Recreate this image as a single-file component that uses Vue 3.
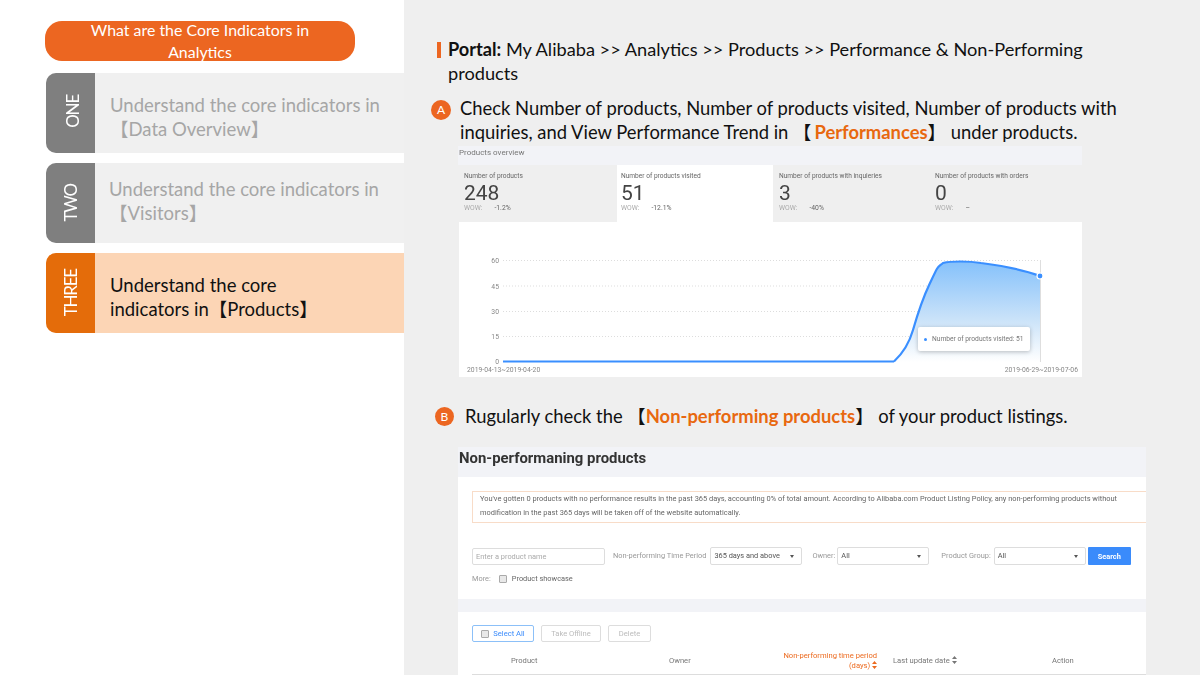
<template>
  <div class="page">
    <aside class="side">
      <div class="pill"><span>What are the Core Indicators in<br />Analytics</span></div>
      <div
        v-for="item in steps"
        :key="item.tab"
        class="step"
        :class="[item.cls, { active: item.active }]"
      >
        <div class="tab"><span>{{ item.tab }}</span></div>
        <p class="stepText">{{ item.line1 }}<br />{{ item.line2 }}</p>
      </div>
    </aside>

    <main class="content">
      <div class="portal">
        <span class="bar"></span>
        <p><b>Portal:</b> My Alibaba &gt;&gt; Analytics &gt;&gt; Products &gt;&gt; Performance &amp; Non-Performing<br />products</p>
      </div>

      <div class="point pointA">
        <span class="badge">A</span>
        <p>Check Number of products, Number of products visited, Number of products with<br />inquiries, and View Performance Trend in 【<em>Performances</em>】 under products.</p>
      </div>

      <section class="shotA">
        <div class="shotTitle">Products overview</div>
        <div class="stats">
          <div v-for="s in stats" :key="s.label" class="stat" :class="{ on: s.on }">
            <div class="statLabel">{{ s.label }}</div>
            <div class="statNum">{{ s.num }}</div>
            <div class="statWow"><span>WOW:</span><span class="wowVal">{{ s.wow }}</span></div>
          </div>
        </div>
        <div class="chart">
          <svg width="623" height="155" viewBox="0 0 623 155">
            <defs>
              <linearGradient id="area" x1="0" y1="0" x2="0" y2="1">
                <stop offset="0" stop-color="#85c1fb" />
                <stop offset="0.6" stop-color="#cde4f9" />
                <stop offset="1" stop-color="#ffffff" />
              </linearGradient>
            </defs>
            <g v-for="g in grid" :key="g.label">
              <line x1="44" x2="581" :y1="g.y" :y2="g.y" class="gridLine" />
              <text x="40" :y="g.y + 2.5" text-anchor="end" class="axis">{{ g.label }}</text>
            </g>
            <line x1="44" x2="581" y1="139.5" y2="139.5" stroke="#dcdcdc" />
            <line x1="581.5" x2="581.5" y1="38" y2="140" stroke="#dedede" />
            <path :d="curve + ' L581 140 L435 140 Z'" fill="url(#area)" />
            <path :d="'M44 139.5 L435 139.5 ' + curve" fill="none" stroke="#3a8fff" stroke-width="2.2" />
            <circle cx="581" cy="54" r="3" fill="#3a8fff" stroke="#fff" stroke-width="1.2" />
            <text x="8" y="150" class="axis">2019-04-13~2019-04-20</text>
            <text x="619" y="150" text-anchor="end" class="axis">2019-06-29~2019-07-06</text>
          </svg>
          <div class="tip"><i></i>Number of products visited: 51</div>
        </div>
      </section>

      <div class="point pointB">
        <span class="badge small">B</span>
        <p>Rugularly check the 【<em>Non-performing products</em>】 of your product listings.</p>
      </div>

      <section class="shotB">
        <h2>Non-performaning products</h2>
        <div class="panel filterPanel">
          <div class="notice">You've gotten 0 products with no performance results in the past 365 days, accounting 0% of total amount. According to Alibaba.com Product Listing Policy, any non-performing products without<br />modification in the past 365 days will be taken off of the website automatically.</div>
          <div class="filters">
            <div class="input">Enter a product name</div>
            <span class="lbl lblTime">Non-performing Time Period</span>
            <div class="select"><span>365 days and above</span><i></i></div>
            <span class="lbl lblOwner">Owner:</span>
            <div class="select"><span>All</span><i></i></div>
            <span class="lbl lblGroup">Product Group:</span>
            <div class="select"><span>All</span><i></i></div>
            <button class="search">Search</button>
          </div>
          <div class="more">
            <span class="lbl">More:</span>
            <span class="check"></span>
            <span class="showcase">Product showcase</span>
          </div>
        </div>
        <div class="panel tablePanel">
          <div class="actions">
            <button class="btn primary"><span class="check"></span>Select All</button>
            <button class="btn offline">Take Offline</button>
            <button class="btn del">Delete</button>
          </div>
          <div class="thead">
            <span class="colProduct">Product</span>
            <span class="colOwner">Owner</span>
            <span class="colPeriod">Non-performing time period<br />(days)
              <svg class="sort" width="5" height="8" viewBox="0 0 5 8"><path d="M2.5 0 5 3H0zM0 5h5L2.5 8z" fill="#ec6a1f" /></svg>
            </span>
            <span class="colDate">Last update date
              <svg class="sort" width="5" height="8" viewBox="0 0 5 8"><path d="M2.5 0 5 3H0zM0 5h5L2.5 8z" fill="#777" /></svg>
            </span>
            <span class="colAction">Action</span>
          </div>
        </div>
      </section>
    </main>
  </div>
</template>

<script setup>
const steps = [
  { tab: "ONE", cls: "one", line1: "Understand the core indicators in", line2: "【Data Overview】" },
  { tab: "TWO", cls: "two", line1: "Understand the core indicators in", line2: "【Visitors】" },
  { tab: "THREE", cls: "three", active: true, line1: "Understand the core", line2: "indicators in【Products】" },
];

const stats = [
  { label: "Number of products", num: "248", wow: "-1.2%" },
  { label: "Number of products visited", num: "51", wow: "-12.1%", on: true },
  { label: "Number of products with inquieries", num: "3", wow: "-40%" },
  { label: "Number of products with orders", num: "0", wow: "–" },
];

const grid = [
  { label: "60", y: 38.5 },
  { label: "45", y: 64 },
  { label: "30", y: 89.5 },
  { label: "15", y: 114.5 },
  { label: "0", y: 139.5 },
];

const curve =
  "M435 139.5 C442 133 450 122 454 108 S462 80 471 61 S478 46 484 41 C492 39 510 39 522 41 C545 44 565 48 581 54";
</script>

<style>
body {
  margin: 0;
  overflow: hidden;
}
</style>

<style scoped>
.page {
  display: flex;
  width: 1200px;
  height: 675px;
  overflow: hidden;
  background: #fff;
  font-family: Lato, "Noto Sans CJK SC", sans-serif;
}

.side {
  width: 404px;
  flex: none;
  padding: 21px 0 0 46px;
  box-sizing: border-box;
}

.pill {
  display: flex;
  align-items: center;
  justify-content: center;
  width: 310px;
  height: 40px;
  margin: 0 0 12px -1px;
  border-radius: 17px;
  background: #ec6621;
  color: #fff;
  font-size: 15.9px;
  line-height: 22px;
  text-align: center;
}

.step {
  display: flex;
  height: 80px;
  margin-bottom: 10px;
  background: #f0f0f0;
  border-radius: 10px 0 0 10px;
  overflow: hidden;
  color: #a6a6a6;
}

.step.active {
  background: #fcd5b5;
  color: #111;
}

.tab {
  width: 49px;
  flex: none;
  display: flex;
  align-items: center;
  justify-content: center;
  background: #7f7f7f;
  color: #fff;
  font-size: 17px;
  letter-spacing: -1.2px;
}

.tab span {
  writing-mode: vertical-rl;
  transform: rotate(180deg);
}

.one .tab span {
  margin: 0 0 3px 3px;
}

.active .tab {
  background: #e46c0a;
}

.stepText {
  margin: 0;
  align-self: center;
  padding-left: 15px;
  font-size: 18.5px;
  line-height: 24px;
}

.one .stepText,
.three .stepText {
  padding-top: 7px;
}

.two .stepText {
  padding-left: 14px;
  padding-bottom: 5px;
}

.content {
  flex: 1;
  background: #efefef;
  padding: 37px 0 0 27px;
  color: #111;
  font-size: 18.4px;
  line-height: 24px;
}

.portal {
  display: flex;
  gap: 7px;
}

.portal p {
  font-size: 18.2px;
}

.portal p,
.point p {
  margin: 0;
  white-space: nowrap;
}

.portal b {
  font-weight: 700;
}

.bar {
  width: 4px;
  height: 16px;
  margin: 5px 0 0 6px;
  background: #ec6621;
  flex: none;
}

.point {
  display: flex;
}

.pointA {
  margin-top: 11px;
  gap: 9px;
}

.pointA em {
  margin-left: 3px;
}

.pointB {
  margin-top: 27px;
  gap: 11px;
  padding-left: 4px;
}

.badge {
  width: 20px;
  height: 20px;
  margin-top: 4px;
  border-radius: 50%;
  background: #ec6621;
  color: #fff;
  font-size: 12px;
  line-height: 20px;
  text-align: center;
  flex: none;
}

.badge.small {
  width: 19px;
  height: 19px;
  line-height: 19px;
  margin-top: 3px;
}

em {
  font-style: normal;
  font-weight: 700;
  color: #e8680f;
}

.shotA {
  width: 624px;
  margin: 2px 0 0 27px;
  font-family: Roboto, sans-serif;
  color: #666;
  filter: blur(0.3px);
}

.shotTitle {
  height: 19px;
  padding-left: 1px;
  background: #f2f3f7;
  font-size: 8px;
  line-height: 13px;
  color: #777;
}

.stats {
  display: grid;
  grid-template-columns: 159px 156px 156px 153px;
  height: 57px;
}

.stat {
  padding: 7px 0 0 6px;
  background: #efefef;
}

.stat.on {
  background: #fff;
  padding-left: 4px;
}

.statLabel {
  font-size: 6.6px;
  line-height: 9px;
  color: #666;
}

.statNum {
  font-size: 21px;
  line-height: 23px;
  color: #444;
  margin-top: 1px;
}

.statWow {
  display: flex;
  gap: 12px;
  margin-top: -1px;
  font-size: 6.8px;
  line-height: 9px;
  color: #aaa;
}

.wowVal {
  color: #666;
}

.chart {
  position: relative;
  height: 155px;
  margin-left: 1px;
  background: #fff;
}

.chart svg {
  display: block;
}

.gridLine {
  stroke: #ddd;
  stroke-dasharray: 1 2;
}

.axis {
  font-size: 6.8px;
  fill: #888;
  font-family: Roboto, sans-serif;
}

.tip {
  position: absolute;
  left: 459px;
  top: 105px;
  width: 112px;
  height: 24px;
  box-sizing: border-box;
  padding-left: 6px;
  background: #fff;
  border-radius: 2px;
  box-shadow: 0 1px 4px rgba(0, 0, 0, 0.25);
  font-size: 6.7px;
  line-height: 24px;
  color: #777;
  white-space: nowrap;
}

.tip i {
  display: inline-block;
  width: 3px;
  height: 3px;
  margin-right: 5px;
  border-radius: 50%;
  background: #3a8fff;
  vertical-align: middle;
}

.shotB {
  width: 688px;
  margin: 19px 0 0 27px;
  height: 228px;
  background: #f2f3f7;
  font-family: Roboto, sans-serif;
  color: #777;
  filter: blur(0.3px);
}

.shotB h2 {
  margin: 0;
  height: 30px;
  padding-left: 1px;
  font-size: 14.9px;
  font-weight: 700;
  line-height: 22px;
  color: #333;
}

.panel {
  background: #fff;
  padding-left: 14px;
}

.filterPanel {
  height: 122px;
  padding-top: 14px;
  box-sizing: border-box;
  margin-bottom: 13px;
}

.notice {
  height: 32px;
  box-sizing: border-box;
  padding: 0 0 0 7px;
  border: 1px solid #f8dcc8;
  border-right: none;
  font-size: 7.44px;
  line-height: 14px;
  color: #666;
  white-space: nowrap;
  overflow: hidden;
}

.filters {
  display: flex;
  align-items: center;
  margin-top: 24px;
  height: 18px;
  font-size: 7.4px;
}

.input {
  width: 133px;
  height: 17px;
  box-sizing: border-box;
  padding-left: 3px;
  border: 1px solid #ddd;
  border-radius: 2px;
  line-height: 15px;
  color: #aaa;
}

.lbl {
  color: #999;
  white-space: nowrap;
}

.lblTime {
  margin: 0 4px 0 8px;
}

.lblOwner {
  margin: 0 2px 0 10px;
}

.lblGroup {
  margin: 0 3px 0 12px;
}

.select {
  width: 92px;
  height: 18px;
  box-sizing: border-box;
  display: flex;
  align-items: center;
  justify-content: space-between;
  padding: 0 7px 0 3px;
  border: 1px solid #ddd;
  border-radius: 2px;
  color: #555;
}

.select i {
  width: 0;
  height: 0;
  border: 2.5px solid transparent;
  border-top: 3px solid #555;
  border-bottom: none;
}

.search {
  width: 43px;
  height: 18px;
  margin-left: 2px;
  padding: 0;
  border: none;
  border-radius: 1px;
  background: #3a8bfb;
  color: #fff;
  font: 700 7.4px Roboto, sans-serif;
}

.more {
  display: flex;
  align-items: center;
  margin-top: 6px;
  height: 16px;
  font-size: 7.4px;
}

.check {
  width: 6px;
  height: 6px;
  border: 1px solid #aaa;
  border-radius: 1px;
  background: #e8e8e8;
  flex: none;
}

.more .check {
  margin: 0 5px 0 8px;
}

.showcase {
  color: #666;
}

.tablePanel {
  height: 63px;
  padding-top: 13px;
  box-sizing: border-box;
}

.actions {
  display: flex;
  gap: 7px;
  height: 17px;
}

.btn {
  display: flex;
  align-items: center;
  justify-content: center;
  padding: 0;
  background: #fff;
  border: 1px solid #ddd;
  border-radius: 2px;
  color: #bbb;
  font: 7.6px Roboto, sans-serif;
}

.btn.offline {
  width: 60px;
}

.btn.del {
  width: 43px;
}

.btn.primary {
  width: 62px;
  border-color: #8cc0f8;
  color: #3a8bfb;
  gap: 4px;
}

.thead {
  display: grid;
  grid-template-columns: 158px 92px 155px 175px 1fr;
  align-items: center;
  height: 27px;
  margin-top: 5px;
  border-bottom: 1px solid #ddd;
  font-size: 7.6px;
  line-height: 10px;
}

.colProduct {
  padding-left: 39px;
}

.colOwner {
  padding-left: 39px;
}

.colPeriod {
  color: #ec6a1f;
  text-align: right;
  white-space: nowrap;
}

.colDate {
  padding-left: 16px;
}

.sort {
  vertical-align: -1px;
}
</style>
